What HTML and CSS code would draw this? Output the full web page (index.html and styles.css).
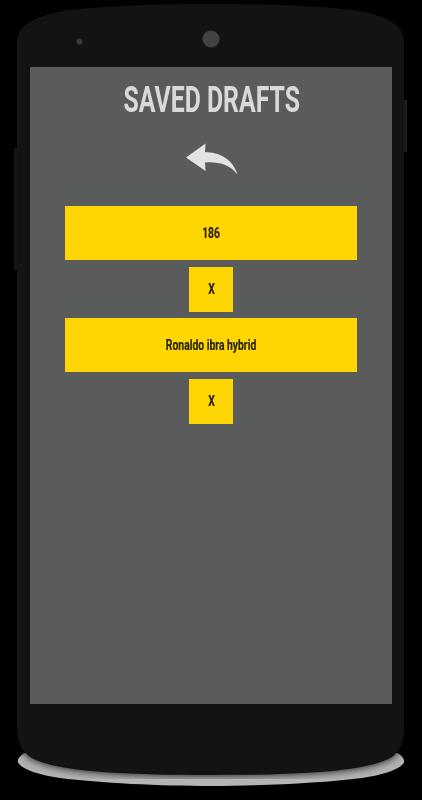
FILE: index.html
```html
<!DOCTYPE html>
<html lang="en">
<head>
<meta charset="utf-8">
<title>Saved Drafts</title>
<link rel="stylesheet" href="styles.css">
</head>
<body>
<div class="phone">
  <svg class="phone-body" width="422" height="800" viewBox="0 0 422 800" aria-hidden="true">
    <defs>
      <filter id="soft" x="-5%" y="-5%" width="110%" height="110%">
        <feGaussianBlur stdDeviation="5"/>
      </filter>
      <clipPath id="shadow-clip">
        <path d="M25 753C19 756 16 761 19 764C24 770 40 775 60 778C100 783 160 786 211 786C262 786 322 783 362 778C382 775 398 770 403 764C406 761 403 756 397 753Z"/>
      </clipPath>
    </defs>
    <path d="M25 753C19 756 16 761 19 764C24 770 40 775 60 778C100 783 160 786 211 786C262 786 322 783 362 778C382 775 398 770 403 764C406 761 403 756 397 753Z" fill="#b4b4b4"/>
    <g clip-path="url(#shadow-clip)">
      <path d="M17 700H404V728C404 742 400 751 392 757C372 768 332 775 211 775C90 775 50 768 30 757C22 751 17 742 17 728Z" fill="#000" filter="url(#soft)"/>
    </g>
    <rect x="14" y="148" width="4" height="122" fill="#151515"/>
    <rect x="403" y="100" width="4" height="52" fill="#1c1c1c"/>
    <path d="M17 42C17 25 36 15 70 10C115 5 160 4 211 4C262 4 307 5 352 10C386 15 404 25 404 42V728C404 742 400 751 392 757C372 768 332 775 211 775C90 775 50 768 30 757C22 751 17 742 17 728Z" fill="#131313"/>
    <circle cx="211" cy="39" r="8.5" fill="#424242"/>
    <circle cx="79.500" cy="41.500" r="3" fill="#3a3a3a"/>
  </svg>
  <main class="screen">
    <h1 class="title"><span class="squeeze">SAVED DRAFTS</span></h1>
    <svg class="back" width="54" height="32" viewBox="0 0 54 32" aria-label="Back">
      <path d="M1 14.500L20.500 0.500L20 9C34 9.500 47 15 52.500 31.500C45 21.500 33 18.500 20 19.500L20.500 28Z" fill="#e3e3e3"/>
    </svg>
    <ul class="drafts">
      <li class="draft"><button class="btn name"><span class="squeeze">186</span></button><button class="btn del"><span class="squeeze">X</span></button></li>
      <li class="draft"><button class="btn name"><span class="squeeze">Ronaldo ibra hybrid</span></button><button class="btn del"><span class="squeeze">X</span></button></li>
    </ul>
  </main>
</div>
</body>
</html>
```

FILE: styles.css
```css
html, body {
  margin: 0;
  padding: 0;
  background: #000;
}
body {
  width: 422px;
  height: 800px;
  overflow: hidden;
  font-family: "Roboto", "Liberation Sans", sans-serif;
}
.phone {
  position: relative;
  width: 422px;
  height: 800px;
  padding: 67px 30px 0;
  box-sizing: border-box;
}
.phone-body {
  position: absolute;
  left: 0;
  top: 0;
}
.screen {
  position: relative;
  height: 637px;
  background: #5a5c5b;
  display: flex;
  flex-direction: column;
  align-items: center;
}
.squeeze {
  display: inline-block;
  transform: scaleX(0.74);
}
.title {
  margin: 15px 0 0 1px;
  font-size: 36.5px;
  line-height: 36px;
  font-weight: 700;
  color: #d8d9d9;
  white-space: nowrap;
}
.title .squeeze {
  transform: scaleX(0.68);
}
.back {
  display: block;
  margin-top: 25px;
  margin-left: 1px;
}
.drafts {
  list-style: none;
  margin: 31px 0 0;
  padding: 0;
  width: 292px;
  display: flex;
  flex-direction: column;
  gap: 6px;
}
.draft {
  display: flex;
  flex-direction: column;
  align-items: center;
  gap: 7px;
}
.btn {
  display: block;
  border: 0;
  padding: 0 0 1px;
  background: #ffd504;
  color: #2a2505;
  font-family: inherit;
  font-weight: 700;
  font-size: 14px;
  -webkit-text-stroke: 0.2px #2a2505;
}
.name {
  width: 292px;
  height: 54px;
}
.del {
  width: 44px;
  height: 45px;
}
```
